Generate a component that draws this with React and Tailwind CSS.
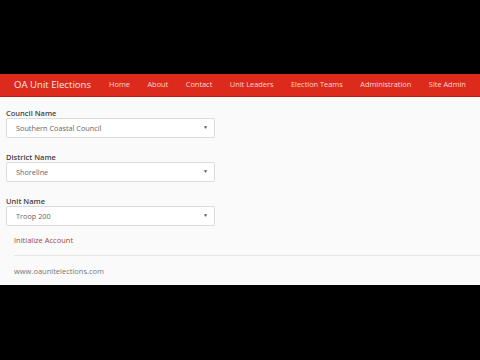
import React from "react";

function Field({ label, value }) {
  return (
    <div className="flex flex-col">
      <div className="text-[7.5px] leading-[10px] font-semibold text-[#444] h-[10px] whitespace-nowrap">{label}</div>
      <div className="w-[209px] h-[20px] bg-white border border-[#dcdcdc] rounded-[2px] flex items-center justify-between pl-[9px] pr-[6px]">
        <span className="text-[7.3px] text-[#666] whitespace-nowrap">{value}</span>
        <span className="text-[5px] text-[#555]">▼</span>
      </div>
    </div>
  );
}

export default function App() {
  const items = ["Home", "About", "Contact", "Unit Leaders", "Election Teams", "Administration", "Site Admin"];
  return (
    <div className="w-[480px] h-[360px] bg-black flex flex-col" style={{ fontFamily: '"Open Sans", sans-serif' }}>
      <div className="h-[74px] shrink-0 bg-black" />
      <nav className="h-[23px] shrink-0 bg-[#dc2b1d] border-b border-[#b52014] flex items-center pl-[14px] whitespace-nowrap overflow-hidden">
        <span className="text-[9.6px] text-[#fde5e2] mr-[18px] shrink-0">OA Unit Elections</span>
        {items.map((t) => (
          <span key={t} className="text-[7.4px] text-[#fbd5d0] mr-[17.5px] shrink-0">{t}</span>
        ))}
      </nav>
      <main className="h-[188px] shrink-0 bg-[#fafafa] pt-[11px] pl-[6px] flex flex-col">
        <div className="flex flex-col gap-[14px]">
          <Field label="Council Name" value="Southern Coastal Council" />
          <Field label="District Name" value="Shoreline" />
          <Field label="Unit Name" value="Troop 200" />
        </div>
        <div className="ml-[8px] mt-[9px] text-[7.5px] leading-[10px] text-[#a4473c]">Initialize Account</div>
        <div className="ml-[8px] mt-[10px] border-t border-[#e6e6e6]" />
        <div className="ml-[8px] mt-[10px] text-[7.5px] leading-[10px] text-[#777]">www.oaunitelections.com</div>
      </main>
      <div className="flex-1 bg-black" />
    </div>
  );
}
